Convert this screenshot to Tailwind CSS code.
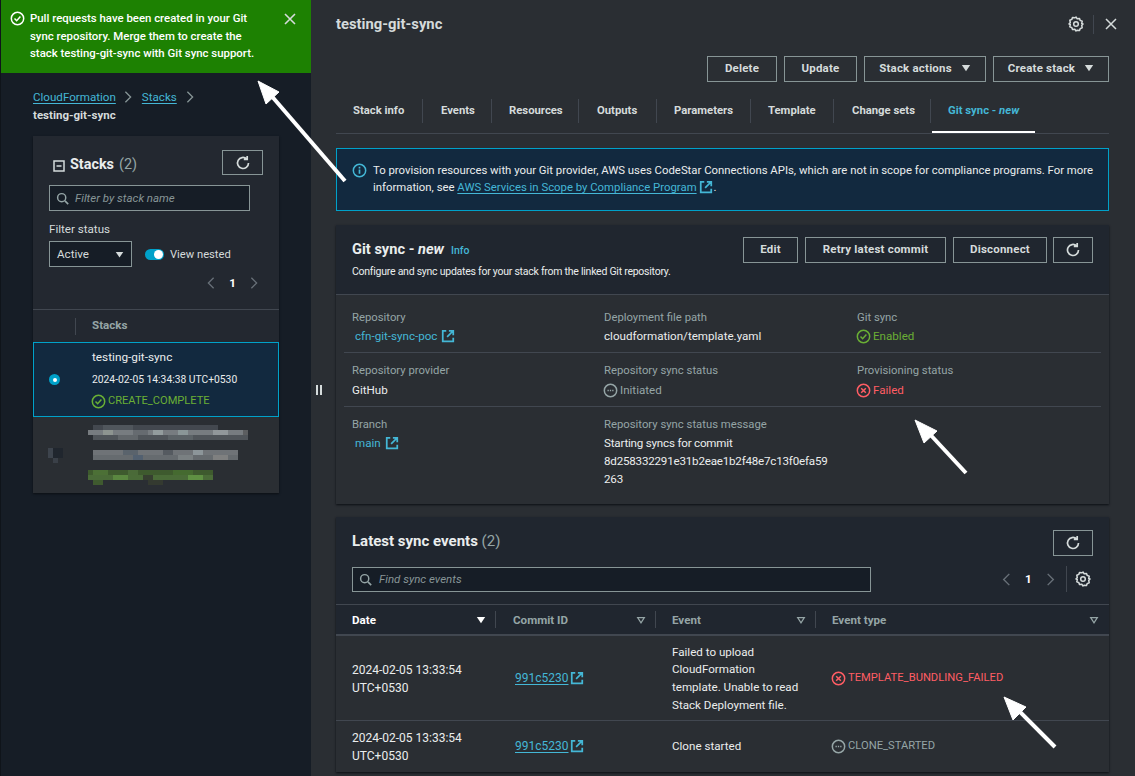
<!DOCTYPE html>
<html lang="en">
<head>
<meta charset="UTF-8" />
<title>testing-git-sync</title>
<script src="https://cdn.jsdelivr.net/npm/@tailwindcss/browser@4"></script>
</head>
<body class="relative w-[1135px] h-[776px] overflow-hidden flex bg-[#2a2e33] text-[#d5dbdb] text-[11.6px] leading-[18px] [font-family:Roboto,'Liberation_Sans',sans-serif]">

<!-- shared icons -->
<svg class="hidden">
  <symbol id="refresh" viewBox="0 0 16 16"><path d="M13.5 8a5.5 5.5 0 1 1-1.800-4.100M12.200 1v3.400H8.800" fill="none" stroke="currentColor" stroke-width="1.700"/></symbol>
  <symbol id="ext" viewBox="0 0 16 16"><path d="M6 2H2v12h12v-4M9 2h5v5M14 2L7 9" fill="none" stroke="currentColor" stroke-width="2"/></symbol>
  <symbol id="search" viewBox="0 0 16 16"><circle cx="7" cy="7" r="5" fill="none" stroke="currentColor" stroke-width="1.800"/><path d="M11 11l4 4" stroke="currentColor" stroke-width="2"/></symbol>
  <symbol id="ok" viewBox="0 0 16 16"><circle cx="8" cy="8" r="6.600" fill="none" stroke="currentColor" stroke-width="1.600"/><path d="M4.800 8l2.300 2.400 4-4.600" fill="none" stroke="currentColor" stroke-width="1.600"/></symbol>
  <symbol id="fail" viewBox="0 0 16 16"><circle cx="8" cy="8" r="6.600" fill="none" stroke="currentColor" stroke-width="1.600"/><path d="M5.500 5.500l5 5M10.500 5.500l-5 5" stroke="currentColor" stroke-width="1.600"/></symbol>
  <symbol id="dots" viewBox="0 0 16 16"><circle cx="8" cy="8" r="6.600" fill="none" stroke="currentColor" stroke-width="1.600"/><path d="M4.800 8h1.400M7.300 8h1.400M9.800 8h1.400" stroke="currentColor" stroke-width="1.600"/></symbol>
  <symbol id="gear" viewBox="0 0 16 16"><path d="M8 1l1.200 1.800 2.200-.4.800 2 2 .9-.5 2.200L15 8l-1.300 1.500.5 2.200-2 .9-.8 2-2.200-.4L8 15l-1.200-1.800-2.200.4-.8-2-2-.9.5-2.200L1 8l1.300-1.500-.5-2.200 2-.9.800-2 2.200.4z" fill="none" stroke="currentColor" stroke-width="1.500" stroke-linejoin="round"/><circle cx="8" cy="8" r="2.300" fill="none" stroke="currentColor" stroke-width="1.500"/></symbol>
  <symbol id="left" viewBox="0 0 16 16"><path d="M11 2L5 8l6 6" fill="none" stroke="currentColor" stroke-width="1.500"/></symbol>
  <symbol id="right" viewBox="0 0 16 16"><path d="M5 2l6 6-6 6" fill="none" stroke="currentColor" stroke-width="1.500"/></symbol>
  <symbol id="caret" viewBox="0 0 12 12"><path d="M1 2.500h10L6 10z" fill="currentColor"/></symbol>
  <symbol id="caret-o" viewBox="0 0 12 12"><path d="M2 3h8L6 9.500z" fill="none" stroke="currentColor" stroke-width="1.500"/></symbol>
</svg>

<!-- Left navigation panel -->
<aside class="w-[311px] shrink-0 bg-[#161d26] border-l border-[#0f141a] flex flex-col">
  <div class="h-[73px] bg-[#1d8102] text-white flex items-start pt-[10px] pl-[9px] pr-[15px] text-[11.4px] leading-[17.6px]">
    <svg class="w-[15px] h-[15px] mt-[1px] mr-[5px] shrink-0"><use href="#ok"/></svg>
    <p class="flex-1 font-medium pr-[20px]">Pull requests have been created in your Git sync repository. Merge them to create the stack testing-git-sync with Git sync support.</p>
    <svg class="w-[12px] h-[12px] mt-[3px] shrink-0" viewBox="0 0 12 12"><path d="M1 1l10 10M11 1L1 11" stroke="#d5dbdb" stroke-width="1.600"/></svg>
  </div>

  <nav class="ml-[32px] mt-[15px] leading-[18px]">
    <div class="flex items-center">
      <a class="text-[#44b7d6] underline underline-offset-2">CloudFormation</a>
      <svg class="w-[14px] h-[14px] ml-[5px] mr-[7px] text-[#879596]"><use href="#right"/></svg>
      <a class="text-[#44b7d6] underline underline-offset-2">Stacks</a>
      <svg class="w-[14px] h-[14px] ml-[6px] text-[#879596]"><use href="#right"/></svg>
    </div>
    <div class="font-bold text-[11.5px] text-[#d5dbdb]">testing-git-sync</div>
  </nav>

  <section class="ml-[32px] mt-[12px] w-[246px] h-[357px] bg-[#232830] shadow-[0_1px_2px_#0b0f14] flex flex-col">
    <div class="flex items-center justify-between pl-[20px] pr-[16px] pt-[14px]">
      <h2 class="flex items-center mt-[5px] text-[14.4px] font-bold text-[#eaeded]">
        <svg class="w-[12px] h-[12px] mr-[5px] mt-[2px]" viewBox="0 0 12 12"><rect x="1" y="1" width="10" height="10" fill="none" stroke="#d5dbdb" stroke-width="1.500"/><path d="M3.500 6h5" stroke="#d5dbdb" stroke-width="1.500"/></svg>
        Stacks<span class="font-normal text-[#95a5a6] ml-[5px]">(2)</span>
      </h2>
      <button class="w-[41px] h-[25px] border border-[#879596] flex items-center justify-center"><svg class="w-[16px] h-[16px] text-[#d5dbdb]"><use href="#refresh"/></svg></button>
    </div>
    <div class="ml-[16px] mt-[10px] w-[201px] h-[26px] border border-[#879596] bg-[#161d26] flex items-center pl-[6px]">
      <svg class="w-[13px] h-[13px] mr-[6px] text-[#95a5a6]"><use href="#search"/></svg>
      <span class="italic text-[#879596] text-[11.5px]">Filter by stack name</span>
    </div>
    <div class="ml-[16px] mt-[9px]">Filter status</div>
    <div class="ml-[16px] mt-[3px] flex items-center">
      <div class="w-[83px] h-[26px] border border-[#879596] bg-[#161d26] flex items-center justify-between pl-[7px] pr-[7px]">Active<svg class="w-[9px] h-[9px]"><use href="#caret"/></svg></div>
      <span class="ml-[13px] w-[19px] h-[11px] mt-[1px] rounded-full bg-[#00a1c9] flex items-center justify-end pr-[1px]"><i class="block w-[9px] h-[9px] rounded-full bg-white"></i></span>
      <span class="ml-[6px] mt-[1px] text-[11.2px]">View nested</span>
    </div>
    <div class="mt-[7px] flex items-center justify-end pr-[18px] h-[18px]">
      <svg class="w-[14px] h-[14px] text-[#687078]"><use href="#left"/></svg>
      <span class="mx-[11px] font-bold text-white">1</span>
      <svg class="w-[14px] h-[14px] text-[#687078]"><use href="#right"/></svg>
    </div>
    <div class="mt-[17px] h-[33px] border-t border-[#414750] flex items-center">
      <span class="w-[43px] h-[17px] border-r border-[#414750]"></span>
      <span class="ml-[16px] mb-[2px] font-bold text-[#95a5a6]">Stacks</span>
    </div>
    <div class="h-[75px] bg-[#12293f] border border-[#00a1c9] flex items-center">
      <span class="ml-[15px] w-[11px] h-[11px] rounded-full bg-[#00a1c9] flex items-center justify-center shrink-0"><i class="block w-[4px] h-[4px] rounded-full bg-white"></i></span>
      <div class="ml-[32px] flex flex-col text-[#eaeded] text-[11.8px]">
        <div class="h-[21px]">testing-git-sync</div>
        <div class="h-[22px] leading-[22px] text-[10.3px]">2024-02-05 14:34:38 UTC+0530</div>
        <div class="h-[20px] leading-[20px] flex items-center text-[#6aaf35] text-[11.1px]"><svg class="w-[15px] h-[15px] ml-[-1px] mr-[2px]"><use href="#ok"/></svg>CREATE_COMPLETE</div>
      </div>
    </div>
    <!-- second stack, blurred out in the capture -->
    <div class="flex-1 bg-[#2a2e33] flex items-center">
      <svg class="ml-[15px] w-[15px] h-[15px] shrink-0" viewBox="0 0 3 3" shape-rendering="crispEdges"><rect x="0" y="0" width="2" height="2" fill="#3d444d"/><rect x="1" y="0" width="2" height="2" fill="#20262e"/><rect x="1" y="2" width="1" height="1" fill="#3a4048"/></svg>
      <svg class="ml-[25px] w-[160px] h-[60px]" viewBox="0 0 32 12" shape-rendering="crispEdges">
        <rect x="1" y="0" width="25" height="1" fill="#43484f"/><rect x="3" y="0" width="6" height="1" fill="#50565c"/>
        <rect x="0" y="1" width="32" height="1" fill="#777c80"/><rect x="3" y="1" width="2" height="1" fill="#8d9490"/><rect x="9" y="1" width="3" height="1" fill="#666b70"/><rect x="13" y="1" width="2" height="1" fill="#939c9d"/><rect x="18" y="1" width="2" height="1" fill="#8a9697"/><rect x="25" y="1" width="3" height="1" fill="#91979a"/><rect x="31" y="1" width="1" height="1" fill="#5c5e60"/>
        <rect x="1" y="2" width="31" height="1" fill="#50555a"/><rect x="6" y="2" width="4" height="1" fill="#62676b"/><rect x="16" y="2" width="5" height="1" fill="#5c6367"/>
        <rect x="1" y="5" width="29" height="1" fill="#6f7377"/><rect x="7" y="5" width="3" height="1" fill="#5a636c"/><rect x="15" y="5" width="2" height="1" fill="#555a60"/><rect x="21" y="5" width="2" height="1" fill="#8c9599"/>
        <rect x="1" y="6" width="29" height="1" fill="#666b6f"/><rect x="9" y="6" width="2" height="1" fill="#526070"/><rect x="18" y="6" width="3" height="1" fill="#7a8082"/><rect x="25" y="6" width="3" height="1" fill="#7f8080"/>
        <rect x="0" y="9" width="25" height="1" fill="#3e5a2e"/><rect x="1" y="9" width="3" height="1" fill="#4c7036"/><rect x="8" y="9" width="2" height="1" fill="#4a6a38"/><rect x="17" y="9" width="4" height="1" fill="#456a30"/>
        <rect x="0" y="10" width="25" height="1" fill="#4a6b38"/><rect x="5" y="10" width="3" height="1" fill="#5a8740"/><rect x="11" y="10" width="2" height="1" fill="#363f30"/><rect x="20" y="10" width="3" height="1" fill="#5f9043"/>
        <rect x="1" y="11" width="2" height="1" fill="#3f5a2f"/><rect x="12" y="11" width="3" height="1" fill="#343a30"/>
      </svg>
    </div>
  </section>
</aside>

<!-- Splitter handle -->
<div class="absolute left-[316px] top-[385px] flex gap-[2px]"><i class="block w-[2px] h-[10px] bg-[#d5dbdb]"></i><i class="block w-[2px] h-[10px] bg-[#d5dbdb]"></i></div>

<!-- Stack detail -->
<main class="flex-1 pl-[25px] pr-[26px]">
  <header class="h-[48px] flex items-center justify-between">
    <h1 class="text-[14.8px] font-bold text-[#d5dbdb]">testing-git-sync</h1>
    <div class="flex items-center mr-[-8px]">
      <svg class="w-[16px] h-[16px] text-[#d5dbdb]"><use href="#gear"/></svg>
      <span class="ml-[9px] mr-[11px] h-[19px] border-l border-[#414750]"></span>
      <svg class="w-[12px] h-[12px]" viewBox="0 0 12 12"><path d="M1 1l10 10M11 1L1 11" stroke="#d5dbdb" stroke-width="1.500"/></svg>
    </div>
  </header>

  <div class="mt-[8px] flex justify-end gap-[7px] font-bold text-[#d5dbdb] text-[11.500px] tracking-[0.2px]">
    <button class="w-[70px] h-[26px] pb-[2px] border border-[#879596]">Delete</button>
    <button class="w-[73px] h-[26px] pb-[2px] border border-[#879596]">Update</button>
    <button class="w-[122px] h-[26px] pb-[2px] border border-[#879596] flex items-center justify-center gap-[9px]">Stack actions<svg class="w-[10px] h-[10px]"><use href="#caret"/></svg></button>
    <button class="w-[116px] h-[26px] pb-[2px] border border-[#879596] flex items-center justify-center gap-[9px]">Create stack<svg class="w-[10px] h-[10px]"><use href="#caret"/></svg></button>
  </div>

  <div class="h-[52px] pt-[17px] border-b border-[#414750] flex items-start font-bold text-[11.300px] leading-[24px] text-[#d5dbdb]">
    <span class="w-[87px] h-[24px] pl-[17px] border-r border-[#414750]">Stack info</span>
    <span class="w-[69px] h-[24px] pl-[18px] border-r border-[#414750]">Events</span>
    <span class="w-[87px] h-[24px] pl-[17px] border-r border-[#414750]">Resources</span>
    <span class="w-[78px] h-[24px] pl-[18px] border-r border-[#414750]">Outputs</span>
    <span class="w-[94px] h-[24px] pl-[17px] border-r border-[#414750]">Parameters</span>
    <span class="w-[83px] h-[24px] pl-[17px] border-r border-[#414750]">Template</span>
    <span class="w-[97px] h-[24px] pl-[18px] border-r border-[#414750]">Change sets</span>
    <span class="relative h-[24px] pl-[17px] text-[#44b7d6]">Git sync - <i>new</i><b class="absolute left-[1px] top-[32px] w-[103px] h-[2px] bg-white"></b></span>
  </div>

  <div class="mt-[14px] h-[63px] bg-[#12293f] border border-[#00a1c9] flex items-start pl-[15px] pr-[10px] pt-[13px] text-[11.350px] text-[#eaeded] leading-[17px]">
    <svg class="w-[15px] h-[15px] mt-[1px] mr-[6px] shrink-0 text-[#44b7d6]" viewBox="0 0 16 16"><circle cx="8" cy="8" r="6.600" fill="none" stroke="currentColor" stroke-width="1.600"/><path d="M8 7v4.500M8 4v1.800" stroke="currentColor" stroke-width="1.800"/></svg>
    <div>
      <div>To provision resources with your Git provider, AWS uses CodeStar Connections APIs, which are not in scope for compliance programs. For more</div>
      <div>information, see <a class="text-[#44b7d6] underline underline-offset-2">AWS Services in Scope by Compliance Program</a> <svg class="inline w-[14px] h-[14px] align-[-3px] text-[#44b7d6]"><use href="#ext"/></svg>.</div>
    </div>
  </div>

  <!-- Git sync details -->
  <section class="mt-[14px] h-[279px] bg-[#2a2e33] shadow-[0_1px_2px_#0b0f14]">
    <div class="h-[70px] bg-[#20262f] border-b border-[#414750] flex justify-between px-[16px] pt-[12px]">
      <div>
        <div class="flex items-baseline h-[24px] pt-[3px]">
          <span class="text-[14.6px] font-bold text-[#eaeded]">Git sync - <i>new</i></span>
          <a class="ml-[7px] text-[10.500px] font-medium text-[#44b7d6]">Info</a>
        </div>
        <p class="mt-[2px] text-[10.500px] tracking-[-0.25px] text-[#eaeded]">Configure and sync updates for your stack from the linked Git repository.</p>
      </div>
      <div class="flex gap-[7px] font-bold text-[11.500px] text-[#d5dbdb] tracking-[0.2px]">
        <button class="w-[55px] h-[26px] pb-[2px] border border-[#879596]">Edit</button>
        <button class="w-[141px] h-[26px] pb-[2px] border border-[#879596]">Retry latest commit</button>
        <button class="w-[94px] h-[26px] pb-[2px] border border-[#879596]">Disconnect</button>
        <button class="w-[40px] h-[26px] ml-[-1px] border border-[#879596] flex items-center justify-center"><svg class="w-[16px] h-[16px]"><use href="#refresh"/></svg></button>
      </div>
    </div>
    <div class="px-[8px]">
      <div class="h-[58px] pt-[14px] pl-[8px] grid grid-cols-[252px_253px_1fr] border-b border-[#414750]">
        <div><div class="text-[11.3px] text-[#95a5a6]">Repository</div><div class="ml-[3px] flex items-center text-[#44b7d6]">cfn-git-sync-poc<svg class="w-[14px] h-[14px] ml-[4px]"><use href="#ext"/></svg></div></div>
        <div><div class="text-[11.3px] text-[#95a5a6]">Deployment file path</div><div class="text-[#eaeded]">cloudformation/template.yaml</div></div>
        <div><div class="text-[11.3px] text-[#95a5a6]">Git sync</div><div class="flex items-center text-[#6aaf35]"><svg class="w-[15px] h-[15px] ml-[-1px] mr-[2px]"><use href="#ok"/></svg>Enabled</div></div>
      </div>
      <div class="h-[54px] pt-[9px] pl-[8px] grid grid-cols-[252px_253px_1fr] border-b border-[#414750]">
        <div><div class="text-[11.3px] text-[#95a5a6]">Repository provider</div><div class="mt-[1px] text-[#eaeded]">GitHub</div></div>
        <div><div class="text-[11.3px] text-[#95a5a6]">Repository sync status</div><div class="mt-[1px] flex items-center text-[#95a5a6]"><svg class="w-[15px] h-[15px] ml-[-1px] mr-[2px]"><use href="#dots"/></svg>Initiated</div></div>
        <div><div class="text-[11.3px] text-[#95a5a6]">Provisioning status</div><div class="mt-[1px] flex items-center text-[#ff5d64]"><svg class="w-[15px] h-[15px] ml-[-1px] mr-[2px]"><use href="#fail"/></svg>Failed</div></div>
      </div>
      <div class="pt-[9px] pl-[8px] grid grid-cols-[252px_253px_1fr]">
        <div><div class="text-[11.3px] text-[#95a5a6]">Branch</div><div class="ml-[3px] flex items-center text-[#44b7d6]">main<svg class="w-[14px] h-[14px] ml-[4px]"><use href="#ext"/></svg></div></div>
        <div><div class="text-[11.3px] text-[#95a5a6]">Repository sync status message</div><div class="text-[#eaeded] tracking-[-0.2px]">Starting syncs for commit<br>8d258332291e31b2eae1b2f48e7c13f0efa59<br>263</div></div>
      </div>
    </div>
  </section>

  <!-- Sync events table -->
  <section class="mt-[13px] h-[255px] bg-[#2a2e33] shadow-[0_1px_2px_#0b0f14]">
    <div class="h-[87px] bg-[#20262f] px-[16px] pt-[13px] relative">
      <div class="flex items-center justify-between h-[26px]">
        <h2 class="mb-[4px] text-[15px] font-bold text-[#eaeded]">Latest sync events <span class="font-normal text-[#95a5a6]">(2)</span></h2>
        <button class="w-[40px] h-[26px] border border-[#879596] flex items-center justify-center"><svg class="w-[16px] h-[16px] text-[#d5dbdb]"><use href="#refresh"/></svg></button>
      </div>
      <div class="mt-[10px] flex items-center">
        <div class="w-[519px] h-[25px] border border-[#879596] bg-[#161d26] flex items-center pl-[6px]">
          <svg class="w-[13px] h-[13px] mr-[7px] text-[#95a5a6]"><use href="#search"/></svg>
          <span class="italic text-[#879596] text-[11.500px]">Find sync events</span>
        </div>
        <div class="ml-[128px] flex items-center">
          <svg class="w-[15px] h-[15px] text-[#687078]"><use href="#left"/></svg>
          <span class="mx-[11px] font-bold text-white">1</span>
          <svg class="w-[15px] h-[15px] text-[#687078]"><use href="#right"/></svg>
          <span class="ml-[8px] mr-[8px] h-[26px] border-l border-[#414750]"></span>
          <svg class="w-[16px] h-[16px] text-[#d5dbdb]"><use href="#gear"/></svg>
        </div>
      </div>
    </div>
    <div class="h-[32px] bg-[#20262f] border-t border-b-2 border-t-[#414750] border-b-[#414750] grid grid-cols-[160px_160px_160px_1fr] items-center font-bold text-[#95a5a6]">
      <div class="h-[17px] flex items-center justify-between pl-[16px] pr-[9px] border-r border-[#414750] text-white">Date<svg class="w-[10px] h-[10px]"><use href="#caret"/></svg></div>
      <div class="h-[17px] flex items-center justify-between pl-[17px] pr-[9px] border-r border-[#414750]">Commit ID<svg class="w-[10px] h-[10px]"><use href="#caret-o"/></svg></div>
      <div class="h-[17px] flex items-center justify-between pl-[16px] pr-[9px] border-r border-[#414750]">Event<svg class="w-[10px] h-[10px]"><use href="#caret-o"/></svg></div>
      <div class="h-[17px] flex items-center justify-between pl-[16px] pr-[10px]">Event type<svg class="w-[10px] h-[10px]"><use href="#caret-o"/></svg></div>
    </div>
    <div class="h-[85px] border-b border-[#414750] grid grid-cols-[160px_160px_160px_1fr] items-center text-[#eaeded]">
      <div class="pl-[16px] pr-[10px] pt-[2px] text-[12px]">2024-02-05 13:33:54 UTC+0530</div>
      <div class="pl-[19px] flex items-center text-[#44b7d6] text-[12px]"><a class="underline underline-offset-2">991c5230</a><svg class="w-[14px] h-[14px] ml-[1px]"><use href="#ext"/></svg></div>
      <div class="pl-[16px] pr-[14px] pt-[2px] leading-[17.700px]">Failed to upload CloudFormation template. Unable to read Stack Deployment file.</div>
      <div class="pl-[16px] flex items-center text-[#ff5d64] text-[11.200px]"><svg class="w-[15px] h-[15px] ml-[-1px] mr-[2px]"><use href="#fail"/></svg>TEMPLATE_BUNDLING_FAILED</div>
    </div>
    <div class="h-[50px] grid grid-cols-[160px_160px_160px_1fr] items-center text-[#eaeded]">
      <div class="pl-[16px] pr-[10px] pt-[2px] text-[12px]">2024-02-05 13:33:54 UTC+0530</div>
      <div class="pl-[19px] flex items-center text-[#44b7d6] text-[12px]"><a class="underline underline-offset-2">991c5230</a><svg class="w-[14px] h-[14px] ml-[1px]"><use href="#ext"/></svg></div>
      <div class="pl-[16px]">Clone started</div>
      <div class="pl-[16px] flex items-center text-[#95a5a6] text-[11.200px]"><svg class="w-[15px] h-[15px] ml-[-1px] mr-[2px]"><use href="#dots"/></svg>CLONE_STARTED</div>
    </div>
  </section>
</main>

<!-- Annotation arrows drawn over the capture -->
<svg class="absolute left-0 top-0 w-[1135px] h-[776px] pointer-events-none" viewBox="0 0 1135 776">
  <g fill="white" stroke="white">
    <path d="M345 181L269 93" stroke-width="4" fill="none"/><path d="M258 81L279 92 266 104z"/>
    <path d="M966 473L926 430" stroke-width="4" fill="none"/><path d="M915 420L937 431 924 443z"/>
    <path d="M1055 747L1015 707" stroke-width="4" fill="none"/><path d="M1004 697L1026 707 1013 720z"/>
  </g>
</svg>
</body>
</html>
